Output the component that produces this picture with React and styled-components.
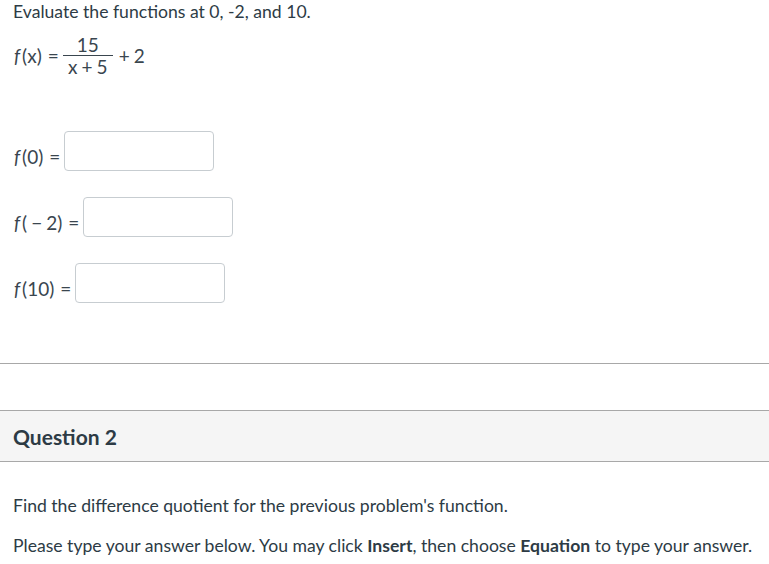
import React from 'react';
import styled, { createGlobalStyle } from 'styled-components';

const Global = createGlobalStyle`
	html, body {
		margin: 0;
		padding: 0;
		background: #fff;
	}
	body {
		font-family: Lato, "Noto Sans", sans-serif;
		color: #2d3b45;
		font-size: 17.6px;
	}
`;

const Page = styled.div`
	width: 769px;
	overflow: hidden;
`;

const Body = styled.div`
	padding: 0 13px;
`;

const Prompt = styled.p`
	margin: 0;
	line-height: 24px;
`;

const Formula = styled.div`
	display: flex;
	align-items: center;
	margin-top: 11px;
	font-size: 19px;
	color: #3a464f;
`;

const Italic = styled.i`
	font-style: italic;
	margin: 0 2px 0 1px;
`;

const Eq = styled.span`
	margin: 0 1px 0 6px;
`;

const Op = styled.span`
	margin: 0 4px;
`;

const Fraction = styled.span`
	display: inline-flex;
	flex-direction: column;
	align-items: center;
	margin: 0 6px 0 3px;
	.num {
		padding: 0 14px 1px;
		line-height: 19px;
		border-bottom: 1px solid #3a464f;
	}
	.den {
		line-height: 19px;
		padding: 1px 4px 0;
	}
`;

const Answers = styled.div`
	margin-top: 55px;
	display: flex;
	flex-direction: column;
	gap: 26px;
`;

const Row = styled.div`
	display: flex;
	align-items: flex-end;
`;

const Label = styled.span`
	padding-bottom: 4px;
	margin-right: 3px;
	line-height: 20px;
	font-size: 19px;
	color: #3a464f;
`;

const Box = styled.input`
	width: 150px;
	height: 40px;
	box-sizing: border-box;
	border: 1px solid #c7cdd1;
	border-radius: 4px;
	background: #fff;
	outline: none;
	padding: 0 8px;
	font: inherit;
`;

const Rule = styled.hr`
	margin: 60px 0 0;
	border: 0;
	border-top: 1px solid #a8a8a8;
`;

const QuestionHeader = styled.div`
	margin-top: 46px;
	height: 50px;
	box-sizing: content-box;
	border-top: 1px solid #a8a8a8;
	border-bottom: 1px solid #a8a8a8;
	background: #f5f5f5;
	display: flex;
	align-items: center;
	padding: 0 13px;
	h2 {
		margin: 0;
		font-size: 21px;
		font-weight: 700;
		color: #2d3b45;
	}
`;

const Text = styled.p`
	margin: 0;
	line-height: 24px;
	padding: 0 13px;
	b {
		font-weight: 700;
	}
`;

const QuestionBody = styled.div`
	padding-top: 32px;
	display: flex;
	flex-direction: column;
	gap: 16px;
`;

function Answer({ label }) {
	return (
		<Row>
			<Label>
				<Italic>f</Italic>({label})<Eq>=</Eq>
			</Label>
			<Box type="text" />
		</Row>
	);
}

export default function App() {
	return (
		<Page>
			<Global />
			<Body>
				<Prompt>Evaluate the functions at 0, -2, and 10.</Prompt>
				<Formula>
					<span>
						<Italic>f</Italic>(x)<Eq>=</Eq>
					</span>
					<Fraction>
						<span className="num">15</span>
						<span className="den">
							x<Op>+</Op>5
						</span>
					</Fraction>
					<span>
						+<Op style={{ marginRight: 0 }}>2</Op>
					</span>
				</Formula>
				<Answers>
					<Answer label="0" />
					<Answer
						label={
							<>
								<Op>−</Op>2
							</>
						}
					/>
					<Answer label="10" />
				</Answers>
			</Body>
			<Rule />
			<QuestionHeader>
				<h2>Question 2</h2>
			</QuestionHeader>
			<QuestionBody>
				<Text>Find the difference quotient for the previous problem's function.</Text>
				<Text>
					Please type your answer below. You may click <b>Insert</b>, then choose <b>Equation</b> to type
					your answer.
				</Text>
			</QuestionBody>
		</Page>
	);
}
